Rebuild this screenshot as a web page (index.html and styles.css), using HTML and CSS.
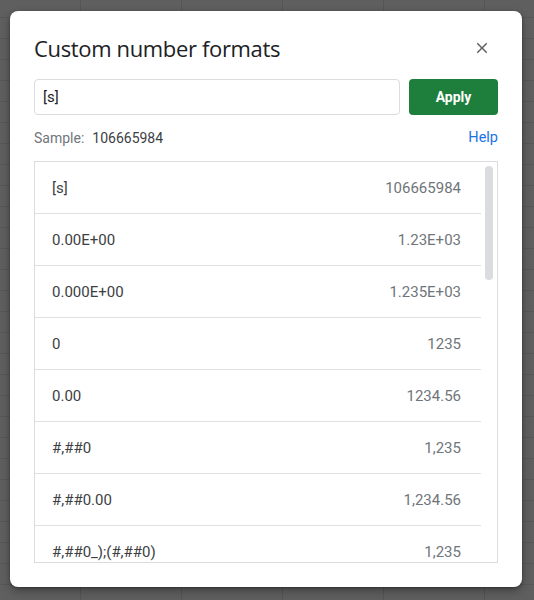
FILE: index.html
```html
<!DOCTYPE html>
<html>
<head>
<meta charset="utf-8">
<link rel="stylesheet" href="styles.css">
</head>
<body>
<div class="dialog">
  <div class="header">
    <div class="title">Custom number formats</div>
    <svg class="close" viewBox="0 0 24 24" width="18" height="18"><path d="M19 6.41L17.59 5 12 10.59 6.41 5 5 6.41 10.59 12 5 17.59 6.41 19 12 13.41 17.59 19 19 17.59 13.41 12z" fill="#5f6368"/></svg>
  </div>
  <div class="input-row">
    <div class="input">[s]</div>
    <div class="apply">Apply</div>
  </div>
  <div class="sample-row">
    <div class="sample"><span class="sample-label">Sample:</span><span class="sample-value">106665984</span></div>
    <div class="help">Help</div>
  </div>
  <div class="list">
    <div class="rows">
      <div class="row"><span class="fmt">[s]</span><span class="val">106665984</span></div>
      <div class="row"><span class="fmt">0.00E+00</span><span class="val">1.23E+03</span></div>
      <div class="row"><span class="fmt">0.000E+00</span><span class="val">1.235E+03</span></div>
      <div class="row"><span class="fmt">0</span><span class="val">1235</span></div>
      <div class="row"><span class="fmt">0.00</span><span class="val">1234.56</span></div>
      <div class="row"><span class="fmt">#,##0</span><span class="val">1,235</span></div>
      <div class="row"><span class="fmt">#,##0.00</span><span class="val">1,234.56</span></div>
      <div class="row"><span class="fmt">#,##0_);(#,##0)</span><span class="val">1,235</span></div>
    </div>
    <div class="track"><div class="thumb"></div></div>
  </div>
</div>
</body>
</html>
```
FILE: styles.css
```css
html, body {
  margin: 0;
  padding: 0;
}
body {
  width: 534px;
  height: 600px;
  overflow: hidden;
  background-color: #5f5f5f;
  background-image:
    repeating-linear-gradient(to right, transparent 0, transparent 80px, #555555 80px, #555555 81px, transparent 81px, transparent 101px),
    repeating-linear-gradient(to bottom, transparent 0, transparent 19px, #575757 19px, #575757 20px, transparent 20px, transparent 21px);
  background-size: 101px 100%, 100% 21px;
  background-position: 0 0, 0 -2px;
  font-family: Roboto, "Liberation Sans", sans-serif;
  padding-top: 11px;
  box-sizing: border-box;
}
.dialog {
  margin-left: 10px;
  width: 512px;
  box-sizing: border-box;
  background: #ffffff;
  border-radius: 8px;
  padding: 23px 24px 24px 24px;
  box-shadow: 0 4px 10px rgba(0, 0, 0, 0.3), 0 1px 3px rgba(0, 0, 0, 0.3);
}
.header {
  display: flex;
  align-items: center;
  justify-content: space-between;
  height: 28px;
}
.title {
  font-family: "Open Sans", Roboto, sans-serif;
  font-size: 22px;
  line-height: 28px;
  color: #202124;
  letter-spacing: -0.35px;
}
.close {
  display: block;
  margin-right: 7px;
}
.input-row {
  display: flex;
  gap: 9px;
  margin-top: 17px;
  height: 36px;
}
.input {
  flex: 1;
  box-sizing: border-box;
  border: 1px solid #dadce0;
  border-radius: 4px;
  padding: 0 8px;
  font-size: 15px;
  line-height: 34px;
  color: #202124;
}
.apply {
  width: 89px;
  background: #1e7f3c;
  border-radius: 4px;
  color: #ffffff;
  font-weight: 700;
  font-size: 14px;
  line-height: 36px;
  text-align: center;
}
.sample-row {
  display: flex;
  justify-content: space-between;
  align-items: center;
  margin-top: 12px;
  height: 20px;
}
.sample-label {
  font-size: 14px;
  color: #70757a;
  margin-right: 8px;
}
.sample-value {
  font-size: 14px;
  color: #3c4043;
}
.help {
  font-size: 14.5px;
  color: #1a73e8;
}
.list {
  margin-top: 14px;
  height: 402px;
  box-sizing: border-box;
  border: 1px solid #dadce0;
  display: flex;
  overflow: hidden;
}
.rows {
  flex: 1;
  display: flex;
  flex-direction: column;
}
.row {
  flex: none;
  height: 52px;
  box-sizing: border-box;
  border-bottom: 1px solid #e0e0e0;
  display: flex;
  align-items: center;
  justify-content: space-between;
  padding: 0 20px 0 17px;
  font-size: 15px;
}
.fmt {
  color: #3c4043;
}
.val {
  color: #70757a;
}
.track {
  width: 16px;
  flex: none;
}
.thumb {
  margin: 4px 0 0 4px;
  width: 8px;
  height: 114px;
  border-radius: 4px;
  background: #dadce0;
}
```
